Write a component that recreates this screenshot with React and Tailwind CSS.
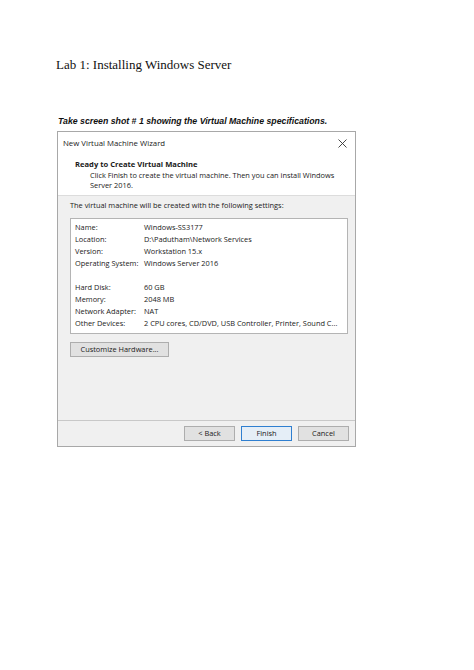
import React from "react";

const rows1 = [
  ["Name:", "Windows-SS3177"],
  ["Location:", "D:\\Padutham\\Network Services"],
  ["Version:", "Workstation 15.x"],
  ["Operating System:", "Windows Server 2016"],
];
const rows2 = [
  ["Hard Disk:", "60 GB"],
  ["Memory:", "2048 MB"],
  ["Network Adapter:", "NAT"],
  ["Other Devices:", "2 CPU cores, CD/DVD, USB Controller, Printer, Sound C..."],
];

function Row({ k, v }) {
  return (
    <div className="flex h-[12px] items-center">
      <div className="w-[69px] shrink-0">{k}</div>
      <div className="whitespace-nowrap">{v}</div>
    </div>
  );
}

export default function App() {
  const ui = { fontFamily: '"Open Sans", "Noto Sans", sans-serif' };
  return (
    <div className="w-[474px] h-[670px] bg-white relative">
      <div className="pt-[57px] pl-[56px]">
        <div
          className="text-[13px] leading-[16px] text-[#111]"
          style={{ fontFamily: '"Liberation Serif", serif' }}
        >
          Lab 1: Installing Windows Server
        </div>
        <div
          className="mt-[42px] pl-[2px] text-[8.75px] leading-[12px] font-bold italic text-[#111]"
          style={{ fontFamily: '"Liberation Sans", Arial, sans-serif' }}
        >
          Take screen shot # 1 showing the Virtual Machine specifications.
        </div>
        <div
          className="mt-[4px] ml-[1px] w-[299px] h-[316px] border border-[#a8a8a8] flex flex-col text-[#1a1a1a]"
          style={ui}
        >
          <div className="bg-white h-[63px] flex flex-col">
            <div className="flex items-center justify-between h-[23px] pl-[5px] pr-[8px]">
              <span className="text-[7.8px]">New Virtual Machine Wizard</span>
              <svg width="9" height="9" viewBox="0 0 9 9">
                <path d="M0.5 0.5 L8.5 8.5 M8.5 0.5 L0.5 8.5" stroke="#333" strokeWidth="0.9" />
              </svg>
            </div>
            <div className="pl-[17px] text-[7.6px] font-bold leading-[10px] mt-[4px]">
              Ready to Create Virtual Machine
            </div>
            <div className="pl-[32px] text-[7.4px] leading-[9.5px] mt-[2px]">
              Click Finish to create the virtual machine. Then you can install Windows
              <br />
              Server 2016.
            </div>
          </div>
          <div className="flex-1 bg-[#f0f0f0] border-t border-[#dcdcdc] flex flex-col text-[7.4px]">
            <div className="pl-[12px] pt-[4px] h-[22px]">
              The virtual machine will be created with the following settings:
            </div>
            <div className="ml-[12px] mr-[7px] h-[116px] bg-white border border-[#b4b4b4] pl-[4px] pt-[3px]">
              {rows1.map(([k, v]) => (
                <Row key={k} k={k} v={v} />
              ))}
              <div className="h-[12px]" />
              {rows2.map(([k, v]) => (
                <Row key={k} k={k} v={v} />
              ))}
            </div>
            <div className="pl-[12px] mt-[8px]">
              <div className="w-[99px] h-[15px] bg-[#e1e1e1] border border-[#adadad] flex items-center justify-center">
                Customize Hardware...
              </div>
            </div>
            <div className="flex-1" />
            <div className="border-t border-[#c8c8c8] h-[26px] flex items-center justify-end gap-[6px] pr-[6px]">
              <div className="w-[51px] h-[15px] bg-[#e1e1e1] border border-[#adadad] flex items-center justify-center">
                &lt; Back
              </div>
              <div className="w-[51px] h-[15px] bg-[#e5eef7] border border-[#2f7fd0] flex items-center justify-center">
                Finish
              </div>
              <div className="w-[51px] h-[15px] bg-[#e1e1e1] border border-[#adadad] flex items-center justify-center">
                Cancel
              </div>
            </div>
          </div>
        </div>
      </div>
    </div>
  );
}
